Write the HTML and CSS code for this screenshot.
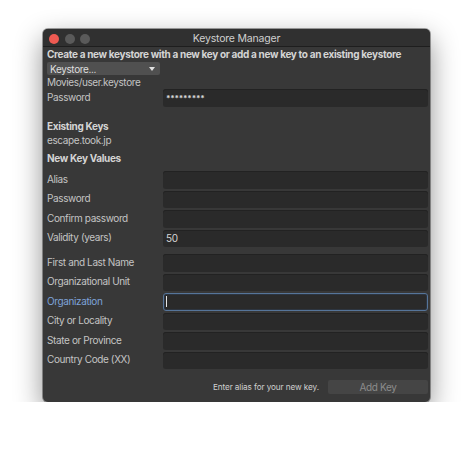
FILE: index.html
```html
<!DOCTYPE html>
<html>
<head>
<meta charset="utf-8">
<link rel="stylesheet" href="styles.css">
</head>
<body>
<div class="window">
  <div class="titlebar">
    <div class="lights">
      <span class="light red"></span>
      <span class="light gray"></span>
      <span class="light gray"></span>
    </div>
    <div class="title">Keystore Manager</div>
  </div>
  <div class="content">
    <div class="heading intro">Create a new keystore with a new key or add a new key to an existing keystore</div>
    <div class="dropdown"><span>Keystore...</span><span class="arrow"></span></div>
    <div class="text">Movies/user.keystore</div>
    <div class="row pw-row">
      <div class="label">Password</div>
      <div class="field"><span class="value stars">*********</span></div>
    </div>
    <div class="heading existing">Existing Keys</div>
    <div class="text">escape.took.jp</div>
    <div class="heading newkey">New Key Values</div>
    <div class="grid group1">
      <div class="label">Alias</div><div class="field"></div>
      <div class="label">Password</div><div class="field"></div>
      <div class="label">Confirm password</div><div class="field"></div>
      <div class="label">Validity (years)</div><div class="field"><span class="value">50</span></div>
    </div>
    <div class="grid group2">
      <div class="label">First and Last Name</div><div class="field"></div>
      <div class="label">Organizational Unit</div><div class="field"></div>
      <div class="label focus-label">Organization</div><div class="field focused"><span class="caret"></span></div>
      <div class="label">City or Locality</div><div class="field"></div>
      <div class="label">State or Province</div><div class="field"></div>
      <div class="label">Country Code (XX)</div><div class="field"></div>
    </div>
    <div class="footer">
      <span class="hint">Enter alias for your new key.</span>
      <div class="button">Add Key</div>
    </div>
  </div>
</div>
</body>
</html>
```

FILE: styles.css
```css
html, body {
  margin: 0;
  padding: 0;
  background: #ffffff;
}
body {
  padding: 29px 0 0 43px;
  font-family: Inter, "Noto Sans", "DejaVu Sans", sans-serif;
  font-size: 10px;
  letter-spacing: -0.38px;
  color: #c4c4c4;
}
.window {
  width: 387px;
  height: 373px;
  background: #383838;
  border-radius: 5px;
  box-shadow: 0 0 0 1px rgba(0,0,0,0.35), 0 10px 28px rgba(0,0,0,0.45);
  overflow: hidden;
  display: flex;
  flex-direction: column;
}
.titlebar {
  height: 17px;
  background: #303030;
  border-bottom: 1px solid #1e1e1e;
  display: flex;
  align-items: center;
  position: relative;
}
.lights {
  display: flex;
  gap: 5.5px;
  padding-left: 6px;
  margin-top: 2px;
}
.light {
  width: 10px;
  height: 10px;
  border-radius: 50%;
  display: block;
}
.light.red { background: #ee5a52; }
.light.gray { background: #5a5a5a; }
.title {
  position: absolute;
  left: 0;
  right: 0;
  top: 0;
  bottom: 0;
  text-align: center;
  line-height: 19px;
  font-size: 10.5px;
  letter-spacing: -0.2px;
  color: #cfcfcf;
}
.content {
  padding: 0 2px 0 4px;
  display: flex;
  flex-direction: column;
  flex: 1;
}
.heading {
  font-weight: 700;
  color: #d4d4d4;
  line-height: 14px;
  white-space: nowrap;
  letter-spacing: -0.33px;
}
.text {
  line-height: 14px;
}
.dropdown {
  margin-top: 1px;
  width: 113px;
  height: 13px;
  background: #505050;
  border-radius: 2px;
  color: #dedede;
  display: flex;
  align-items: center;
  justify-content: space-between;
  padding: 0 5px 0 3px;
  box-sizing: border-box;
}
.arrow {
  width: 0;
  height: 0;
  border-left: 3.5px solid transparent;
  border-right: 3.5px solid transparent;
  border-top: 4px solid #e0e0e0;
}
.row {
  display: grid;
  grid-template-columns: 116px 1fr;
  align-items: center;
}
.pw-row .field {
  height: 18px;
}
.label {
  white-space: nowrap;
  padding-bottom: 2px;
}
.focus-label {
  color: #7ea3d8;
}
.field {
  height: 17.5px;
  background: #2a2a2a;
  border-radius: 3px;
  box-shadow: inset 0 1px 0 #222222;
  box-sizing: border-box;
  display: flex;
  align-items: center;
  padding-left: 3px;
  color: #d6d6d6;
}
.field.focused {
  border: 1px solid #56759a;
  box-shadow: inset 0 0 0 1px #2d3540;
  padding-left: 2px;
}
.caret {
  width: 1px;
  height: 11px;
  background: #e6e6e6;
}
.stars {
  letter-spacing: -0.2px;
  font-size: 8px;
  font-weight: 700;
}
.existing {
  margin-top: 12px;
}
.newkey {
  margin-top: 4px;
}
.grid {
  display: grid;
  grid-template-columns: 116px 1fr;
  grid-auto-rows: 17.5px;
  row-gap: 2px;
  align-items: center;
}
.group1 {
  margin-top: 6px;
}
.group2 {
  margin-top: 7px;
}
.footer {
  margin-top: 11px;
  display: flex;
  justify-content: flex-end;
  align-items: center;
  gap: 9px;
}
.hint {
  font-size: 8.2px;
  letter-spacing: -0.1px;
  color: #cfcfcf;
}
.button {
  width: 100px;
  height: 14px;
  background: #454545;
  border-radius: 2px;
  color: #8c8c8c;
  text-align: center;
  line-height: 14px;
}
```
